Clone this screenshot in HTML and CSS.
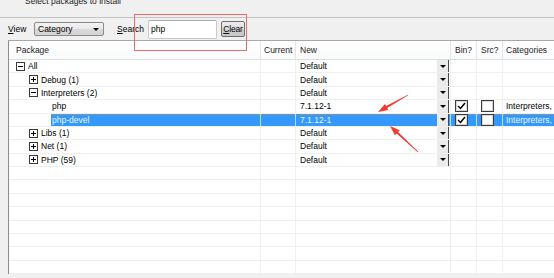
FILE: index.html
```html
<!DOCTYPE html>
<html lang="en">
<head>
    <meta charset="UTF-8">
    <title>Cygwin Setup - Select Packages</title>
    <link rel="stylesheet" href="styles.css">
</head>
<body>
<div class="page">
    <div class="title"><span>Select packages to install</span></div>

    <div class="toolbar">
        <span class="label view-label"><u>V</u>iew</span>
        <div class="combo"><span>Category</span><i class="tri"></i></div>
        <span class="label search-label"><u>S</u>earch</span>
        <div class="search-box">php</div>
        <div class="btn"><u>C</u>lear</div>
    </div>

    <div class="list">
        <div class="row head">
            <div class="cell c-pkg">Package</div>
            <div class="cell c-cur">Current</div>
            <div class="cell c-new">New</div>
            <div class="cell c-bin">Bin?</div>
            <div class="cell c-src">Src?</div>
            <div class="cell c-cat">Categories</div>
        </div>

        <div class="row">
            <div class="cell c-pkg lvl0">
                <svg class="exp" width="9" height="9" viewBox="0 0 9 9"><rect x="0.5" y="0.5" width="8" height="8" fill="#fff" stroke="#3a3a3a"/><path d="M2 4.5h5" stroke="#000"/></svg>
                <span class="name">All</span>
            </div>
            <div class="cell c-cur"></div>
            <div class="cell c-new"><span class="val">Default</span><i class="drop"></i></div>
            <div class="cell c-bin"></div>
            <div class="cell c-src"></div>
            <div class="cell c-cat"></div>
        </div>
        <div class="row">
            <div class="cell c-pkg lvl1">
                <svg class="exp" width="9" height="9" viewBox="0 0 9 9"><rect x="0.5" y="0.5" width="8" height="8" fill="#fff" stroke="#3a3a3a"/><path d="M2 4.5h5M4.5 2v5" stroke="#000"/></svg>
                <span class="name">Debug (1)</span>
            </div>
            <div class="cell c-cur"></div>
            <div class="cell c-new"><span class="val">Default</span><i class="drop"></i></div>
            <div class="cell c-bin"></div>
            <div class="cell c-src"></div>
            <div class="cell c-cat"></div>
        </div>
        <div class="row">
            <div class="cell c-pkg lvl1">
                <svg class="exp" width="9" height="9" viewBox="0 0 9 9"><rect x="0.5" y="0.5" width="8" height="8" fill="#fff" stroke="#3a3a3a"/><path d="M2 4.5h5" stroke="#000"/></svg>
                <span class="name">Interpreters (2)</span>
            </div>
            <div class="cell c-cur"></div>
            <div class="cell c-new"><span class="val">Default</span><i class="drop"></i></div>
            <div class="cell c-bin"></div>
            <div class="cell c-src"></div>
            <div class="cell c-cat"></div>
        </div>
        <div class="row">
            <div class="cell c-pkg lvl2"><span class="name">php</span></div>
            <div class="cell c-cur"></div>
            <div class="cell c-new"><span class="val">7.1.12-1</span><i class="drop"></i></div>
            <div class="cell c-bin"><span class="chk"><svg width="9" height="8" viewBox="0 0 9 8"><path d="M1 4l2.5 2.5L8 1" fill="none" stroke="#000" stroke-width="1.5"/></svg></span></div>
            <div class="cell c-src"><span class="chk"></span></div>
            <div class="cell c-cat">Interpreters, Interpreters</div>
        </div>
        <div class="row sel">
            <div class="cell c-pkg lvl2"><span class="name">php-devel</span></div>
            <div class="cell c-cur"></div>
            <div class="cell c-new"><span class="val">7.1.12-1</span><i class="drop"></i></div>
            <div class="cell c-bin"><span class="chk"><svg width="9" height="8" viewBox="0 0 9 8"><path d="M1 4l2.5 2.5L8 1" fill="none" stroke="#000" stroke-width="1.5"/></svg></span></div>
            <div class="cell c-src"><span class="chk"></span></div>
            <div class="cell c-cat">Interpreters, Interpreters</div>
        </div>
        <div class="row">
            <div class="cell c-pkg lvl1">
                <svg class="exp" width="9" height="9" viewBox="0 0 9 9"><rect x="0.5" y="0.5" width="8" height="8" fill="#fff" stroke="#3a3a3a"/><path d="M2 4.5h5M4.5 2v5" stroke="#000"/></svg>
                <span class="name">Libs (1)</span>
            </div>
            <div class="cell c-cur"></div>
            <div class="cell c-new"><span class="val">Default</span><i class="drop"></i></div>
            <div class="cell c-bin"></div>
            <div class="cell c-src"></div>
            <div class="cell c-cat"></div>
        </div>
        <div class="row">
            <div class="cell c-pkg lvl1">
                <svg class="exp" width="9" height="9" viewBox="0 0 9 9"><rect x="0.5" y="0.5" width="8" height="8" fill="#fff" stroke="#3a3a3a"/><path d="M2 4.5h5M4.5 2v5" stroke="#000"/></svg>
                <span class="name">Net (1)</span>
            </div>
            <div class="cell c-cur"></div>
            <div class="cell c-new"><span class="val">Default</span><i class="drop"></i></div>
            <div class="cell c-bin"></div>
            <div class="cell c-src"></div>
            <div class="cell c-cat"></div>
        </div>
        <div class="row">
            <div class="cell c-pkg lvl1">
                <svg class="exp" width="9" height="9" viewBox="0 0 9 9"><rect x="0.5" y="0.5" width="8" height="8" fill="#fff" stroke="#3a3a3a"/><path d="M2 4.5h5M4.5 2v5" stroke="#000"/></svg>
                <span class="name">PHP (59)</span>
            </div>
            <div class="cell c-cur"></div>
            <div class="cell c-new"><span class="val">Default</span><i class="drop"></i></div>
            <div class="cell c-bin"></div>
            <div class="cell c-src"></div>
            <div class="cell c-cat"></div>
        </div>

        <div class="row"><div class="cell c-pkg"></div><div class="cell c-cur"></div><div class="cell c-new"></div><div class="cell c-bin"></div><div class="cell c-src"></div><div class="cell c-cat"></div></div>
        <div class="row"><div class="cell c-pkg"></div><div class="cell c-cur"></div><div class="cell c-new"></div><div class="cell c-bin"></div><div class="cell c-src"></div><div class="cell c-cat"></div></div>
        <div class="row"><div class="cell c-pkg"></div><div class="cell c-cur"></div><div class="cell c-new"></div><div class="cell c-bin"></div><div class="cell c-src"></div><div class="cell c-cat"></div></div>
        <div class="row"><div class="cell c-pkg"></div><div class="cell c-cur"></div><div class="cell c-new"></div><div class="cell c-bin"></div><div class="cell c-src"></div><div class="cell c-cat"></div></div>
        <div class="row"><div class="cell c-pkg"></div><div class="cell c-cur"></div><div class="cell c-new"></div><div class="cell c-bin"></div><div class="cell c-src"></div><div class="cell c-cat"></div></div>
        <div class="row"><div class="cell c-pkg"></div><div class="cell c-cur"></div><div class="cell c-new"></div><div class="cell c-bin"></div><div class="cell c-src"></div><div class="cell c-cat"></div></div>
        <div class="row"><div class="cell c-pkg"></div><div class="cell c-cur"></div><div class="cell c-new"></div><div class="cell c-bin"></div><div class="cell c-src"></div><div class="cell c-cat"></div></div>
        <div class="row"><div class="cell c-pkg"></div><div class="cell c-cur"></div><div class="cell c-new"></div><div class="cell c-bin"></div><div class="cell c-src"></div><div class="cell c-cat"></div></div>
    </div>

    <!-- annotations drawn over the screenshot -->
    <div class="mark"></div>
    <svg class="arrows" width="554" height="278" viewBox="0 0 554 278">
        <polygon points="407.8,94.65 386.16,106.11 384.97,104.02 378,112 388.43,110.12 387.24,108.03 408.2,95.35"/>
        <polygon points="418.27,151.71 398.08,131.99 399.71,130.23 390,126 394.95,135.37 396.58,133.61 417.73,152.29"/>
    </svg>
</div>
</body>
</html>
```

FILE: styles.css
```css
body {
    margin: 0;
    font-family: 'Liberation Sans', Arial, sans-serif;
    font-size: 8.5px;
    color: #000;
    background: #f0f0f0;
}
.page {
    position: relative;
    width: 554px;
    height: 278px;
    overflow: hidden;
    background: #f0f0f0;
}
.title {
    height: 21px;
    padding-left: 25px;
    border-bottom: 1px solid #c3c3c3;
}
.title span {
    display: block;
    margin-top: -4px;
    line-height: 10px;
    color: #222;
}
.toolbar {
    display: flex;
    align-items: center;
    height: 22px;
    padding-left: 8px;
}
.label {
    flex: none;
}
.view-label {
    width: 26px;
}
.search-label {
    width: 31px;
    margin-left: 13px;
}
.combo {
    display: flex;
    align-items: center;
    box-sizing: border-box;
    width: 70px;
    height: 14px;
    padding: 0 4px 0 3px;
    border: 1px solid #8a8a8a;
    border-radius: 2px;
    background: linear-gradient(#f4f4f4, #e8e8e8 50%, #dadada 51%, #d2d2d2);
}
.combo span {
    flex: 1;
}
.tri {
    width: 0;
    height: 0;
    border-top: 3px solid #000;
    border-left: 3px solid transparent;
    border-right: 3px solid transparent;
}
.search-box {
    box-sizing: border-box;
    width: 69px;
    height: 19px;
    padding: 3px 0 0 2px;
    background: #fff;
    border: 1px solid #c8c9cc;
    border-top-color: #a9abb0;
    border-radius: 2px;
}
.btn {
    display: flex;
    align-items: center;
    justify-content: center;
    box-sizing: border-box;
    width: 24px;
    height: 16px;
    margin-left: 4px;
    border: 1px solid #6f6f6f;
    border-radius: 2px;
    letter-spacing: -0.2px;
    white-space: nowrap;
    background: linear-gradient(#ededed, #dcdcdc 50%, #cfcfcf 51%, #c6c6c6);
}
.list {
    margin-left: 8px;
    border-top: 1px solid #a8a8a8;
    border-left: 1px solid #8c8c8c;
    background: #fff;
}
.row {
    display: flex;
    box-sizing: border-box;
    height: 13.375px;
    border-bottom: 1px solid #f0f0f0;
}
.row.head {
    height: 19px;
    border-bottom: 1px solid #dcdcdc;
    background: linear-gradient(#fff, #fafbfc);
}
.cell {
    display: flex;
    align-items: center;
    flex: none;
    box-sizing: border-box;
    border-right: 1px solid #f0f0f0;
    white-space: nowrap;
    overflow: hidden;
}
.head .cell {
    border-right-color: #e3e5e8;
    color: #1c1c1c;
}
.c-pkg { width: 252px; padding-left: 7px; }
.c-cur { width: 35px; padding-left: 3px; }
.c-new { width: 155px; padding-left: 4px; }
.c-bin { width: 26px; padding-left: 3px; }
.c-src { width: 26px; padding-left: 3px; }
.c-cat { width: 120px; padding-left: 3px; border-right: none; }
.c-pkg.lvl0 { padding-left: 7px; }
.c-pkg.lvl1 { padding-left: 20px; }
.c-pkg.lvl2 { padding-left: 42px; }
.exp {
    flex: none;
    margin-right: 2px;
}
.name {
    padding-left: 1px;
}
.c-new .val {
    flex: 1;
}
.drop {
    display: flex;
    align-items: center;
    justify-content: center;
    align-self: stretch;
    box-sizing: border-box;
    width: 12px;
    margin-right: 1px;
    background: #ebebeb;
    border-right: 1px solid #4a4a4a;
}
.drop::after {
    content: "";
    border-top: 3px solid #000;
    border-left: 3px solid transparent;
    border-right: 3px solid transparent;
}
.c-bin, .c-src {
    padding-left: 4px;
}
.chk {
    display: flex;
    align-items: center;
    justify-content: center;
    box-sizing: border-box;
    width: 13px;
    height: 12px;
    background: #fff;
    border: 1px solid #3c3c3c;
    box-shadow: inset 0 0 0 1px #d8d8d8;
}
.sel .cell:not(.c-pkg),
.sel .name {
    background: #3399ff;
    color: #eaf4ff;
    box-shadow: inset 0 1px 0 #7f93a8;
}
.sel .name {
    flex: 1;
    align-self: stretch;
    display: flex;
    align-items: center;
}
.sel .cell {
    border-right-color: #b9dcff;
}
.mark {
    position: absolute;
    left: 134px;
    top: 14px;
    width: 111px;
    height: 35px;
    border: 1px solid #f06a6a;
}
.arrows {
    position: absolute;
    left: 0;
    top: 0;
    pointer-events: none;
    fill: #ee3b34;
}
```
